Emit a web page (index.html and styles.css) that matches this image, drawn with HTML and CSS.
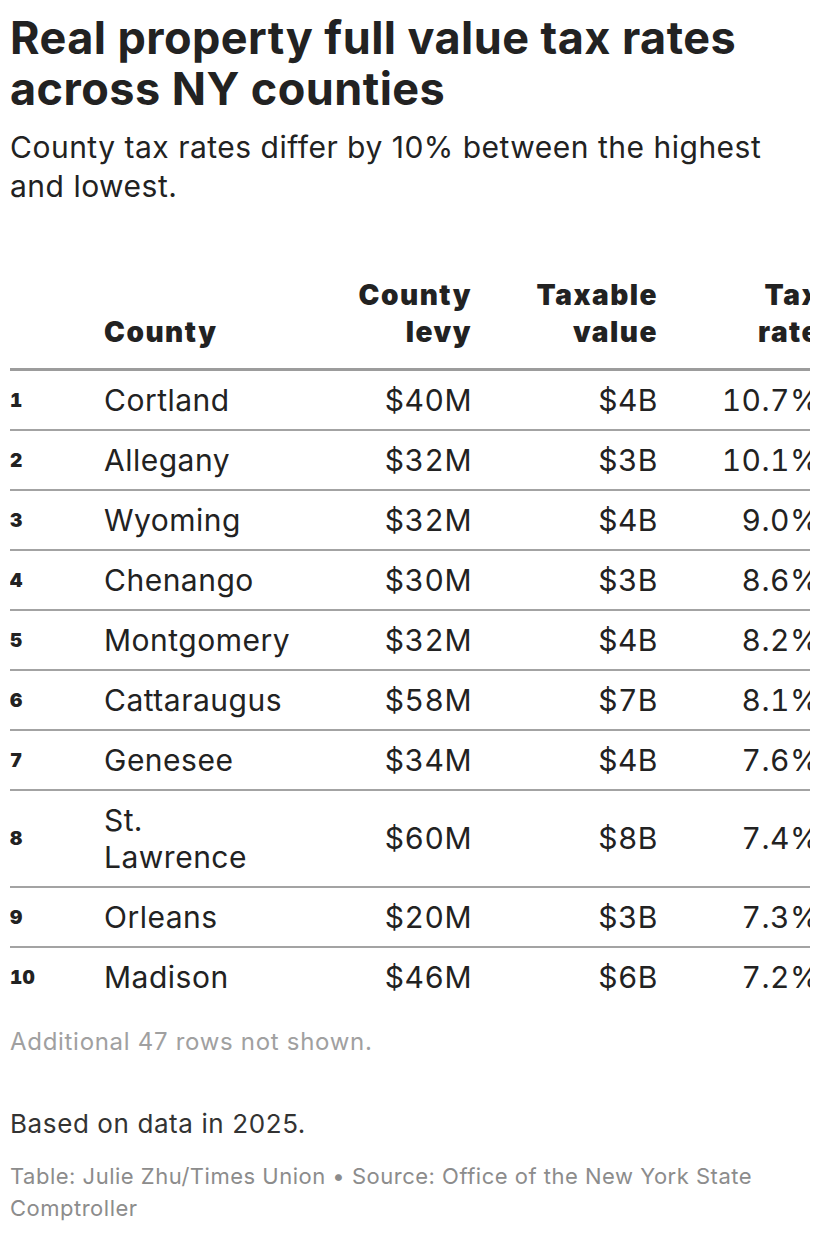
FILE: index.html
```html
<!DOCTYPE html>
<html lang="en">
<head>
<meta charset="utf-8">
<title>Real property full value tax rates across NY counties</title>
<link rel="stylesheet" href="styles.css">
</head>
<body>
<div class="chart">
  <h1 class="title">Real property full value tax rates across NY counties</h1>
  <p class="subtitle">County tax rates differ by 10% between the highest and lowest.</p>

  <div class="table-wrap">
    <table class="data">
      <colgroup>
        <col class="c-rank"><col class="c-county"><col class="c-levy"><col class="c-value"><col class="c-rate">
      </colgroup>
      <thead>
        <tr>
          <th class="rank"></th>
          <th class="left">County</th>
          <th class="num">County<br>levy</th>
          <th class="num">Taxable<br>value</th>
          <th class="num">Tax<br>rate</th>
        </tr>
      </thead>
      <tbody>
        <tr><td class="rank">1</td><td class="left">Cortland</td><td class="num">$40M</td><td class="num">$4B</td><td class="num">10.7%</td></tr>
        <tr><td class="rank">2</td><td class="left">Allegany</td><td class="num">$32M</td><td class="num">$3B</td><td class="num">10.1%</td></tr>
        <tr><td class="rank">3</td><td class="left">Wyoming</td><td class="num">$32M</td><td class="num">$4B</td><td class="num">9.0%</td></tr>
        <tr><td class="rank">4</td><td class="left">Chenango</td><td class="num">$30M</td><td class="num">$3B</td><td class="num">8.6%</td></tr>
        <tr><td class="rank">5</td><td class="left">Montgomery</td><td class="num">$32M</td><td class="num">$4B</td><td class="num">8.2%</td></tr>
        <tr><td class="rank">6</td><td class="left">Cattaraugus</td><td class="num">$58M</td><td class="num">$7B</td><td class="num">8.1%</td></tr>
        <tr><td class="rank">7</td><td class="left">Genesee</td><td class="num">$34M</td><td class="num">$4B</td><td class="num">7.6%</td></tr>
        <tr><td class="rank">8</td><td class="left">St.<br>Lawrence</td><td class="num">$60M</td><td class="num">$8B</td><td class="num">7.4%</td></tr>
        <tr><td class="rank">9</td><td class="left">Orleans</td><td class="num">$20M</td><td class="num">$3B</td><td class="num">7.3%</td></tr>
        <tr><td class="rank">10</td><td class="left">Madison</td><td class="num">$46M</td><td class="num">$6B</td><td class="num">7.2%</td></tr>
      </tbody>
    </table>
  </div>

  <p class="more">Additional 47 rows not shown.</p>
  <p class="note">Based on data in 2025.</p>
  <p class="credit">Table: Julie Zhu/Times Union • Source: Office of the New York State Comptroller</p>
</div>
</body>
</html>
```

FILE: styles.css
```css
html, body {
  margin: 0;
  padding: 0;
  background: #ffffff;
}

body {
  font-family: Inter, "Liberation Sans", sans-serif;
  color: #222222;
}

.chart {
  padding: 0 10px;
}

.title {
  margin: 12px 0 0;
  font-size: 45px;
  line-height: 51px;
  font-weight: 700;
  letter-spacing: 0.45px;
  color: #222222;
}

.subtitle {
  margin: 14px 0 0;
  font-size: 30px;
  line-height: 39px;
  font-weight: 400;
  letter-spacing: 0.5px;
  color: #222222;
}

.table-wrap {
  width: 800px;
  overflow: hidden;
  margin-top: 71px;
}

.data {
  border-collapse: collapse;
  table-layout: fixed;
  width: 810px;
}

.c-rank { width: 94px; }
.c-county { width: 186px; }
.c-levy { width: 182px; }
.c-value { width: 186px; }
.c-rate { width: 162px; }

.data th {
  font-weight: 900;
  font-size: 28px;
  line-height: 37px;
  letter-spacing: 1.5px;
  vertical-align: bottom;
  padding: 0 0 17px;
  border-bottom: 3px solid #9c9c9c;
  color: #222222;
}

.data td {
  font-size: 30px;
  line-height: 37px;
  letter-spacing: 0.5px;
  font-feature-settings: "tnum" 1;
  padding: 10.5px 0;
  vertical-align: middle;
  white-space: nowrap;
  border-bottom: 2px solid #a3a3a3;
  color: #222222;
}

.data tbody tr:last-child td {
  border-bottom: none;
}

.data .left { text-align: left; }
.data .num { text-align: right; }

.data td.rank {
  font-size: 19px;
  font-weight: 900;
  letter-spacing: 0.3px;
  text-align: left;
}

.more {
  margin: 20px 0 0;
  font-size: 24px;
  line-height: 32px;
  letter-spacing: 0.7px;
  color: #a0a0a0;
}

.note {
  margin: 50px 0 0;
  font-size: 26px;
  line-height: 32px;
  letter-spacing: 0.6px;
  color: #333333;
}

.credit {
  margin: 20px 0 0;
  font-size: 22px;
  line-height: 32px;
  letter-spacing: 0.5px;
  color: #8c8c8c;
}
```
